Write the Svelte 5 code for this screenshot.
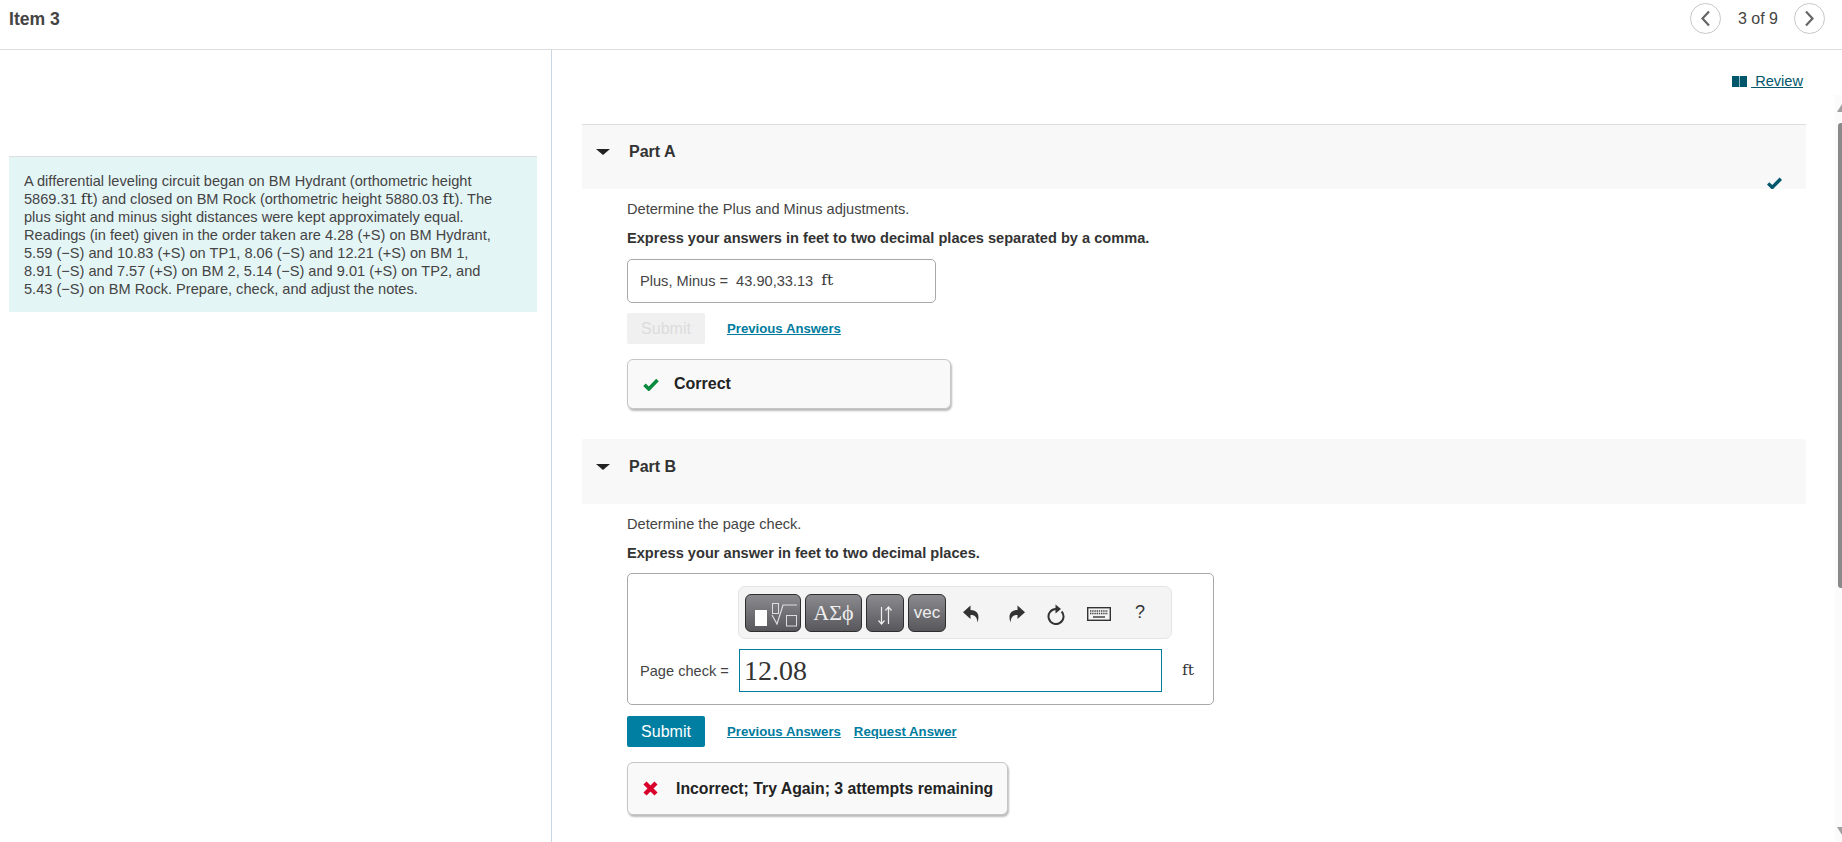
<script>
  const problem = [
    ['A differential leveling circuit began on BM Hydrant (orthometric height'],
    ['5869.31 ', 'ft', ') and closed on BM Rock (orthometric height 5880.03 ', 'ft', '). The'],
    ['plus sight and minus sight distances were kept approximately equal.'],
    ['Readings (in feet) given in the order taken are 4.28 (+S) on BM Hydrant,'],
    ['5.59 (−S) and 10.83 (+S) on TP1, 8.06 (−S) and 12.21 (+S) on BM 1,'],
    ['8.91 (−S) and 7.57 (+S) on BM 2, 5.14 (−S) and 9.01 (+S) on TP2, and'],
    ['5.43 (−S) on BM Rock. Prepare, check, and adjust the notes.'],
  ];
</script>

<div class="page">
  <header class="topbar">
    <h1>Item 3</h1>
    <nav class="pager">
      <span class="round">
        <svg width="11" height="17" viewBox="0 0 11 17"><path d="M9 1.500 2.500 8.500 9 15.500" fill="none" stroke="#666" stroke-width="2.200" /></svg>
      </span>
      <span class="count">3 of 9</span>
      <span class="round">
        <svg width="11" height="17" viewBox="0 0 11 17"><path d="M2 1.500 8.500 8.500 2 15.500" fill="none" stroke="#666" stroke-width="2.200" /></svg>
      </span>
    </nav>
  </header>

  <div class="columns">
    <aside class="left">
      <div class="problem">
        {#each problem as line}
          <div>
            {#each line as bit, i}
              {#if i % 2 === 1}<span class="unit">{bit}</span>{:else}{bit}{/if}
            {/each}
          </div>
        {/each}
      </div>
    </aside>

    <main class="right">
      <div class="review-row">
        <svg class="book" width="15" height="11" viewBox="0 0 15 11"><path d="M0 0h6.600q.6 0 .6.6V11H0zM7.800.6q0-.6.6-.6H15v11H7.800z" fill="#00576b" /></svg>
        <a class="review">&nbsp;Review</a>
      </div>

      <section class="part">
        <div class="part-head">
          <span class="caret"></span>
          <h2>Part A</h2>
          <svg class="done" width="15" height="12" viewBox="0 0 15 12"><path d="M1.200 6.400 5.200 10.400 13.800 1.800" fill="none" stroke="#00576b" stroke-width="3.400" /></svg>
        </div>
        <div class="part-body">
          <p class="ask">Determine the Plus and Minus adjustments.</p>
          <p class="how">Express your answers in feet to two decimal places separated by a comma.</p>
          <div class="answer-box">Plus, Minus = &nbsp;43.90,33.13 &nbsp;<span class="unit">ft</span></div>
          <div class="actions first-actions">
            <button class="submit off">Submit</button>
            <a class="link first">Previous Answers</a>
          </div>
          <div class="feedback good">
            <svg width="16" height="13" viewBox="0 0 16 13"><path d="M1.500 6.800 5.800 11 14.500 2" fill="none" stroke="#0a8a3e" stroke-width="3.600" /></svg>
            <b>Correct</b>
          </div>
        </div>
      </section>

      <section class="part second">
        <div class="part-head">
          <span class="caret"></span>
          <h2>Part B</h2>
        </div>
        <div class="part-body">
          <p class="ask">Determine the page check.</p>
          <p class="how">Express your answer in feet to two decimal places.</p>
          <div class="editor">
            <div class="toolbar">
              <button class="tool wide" aria-label="templates">
                <svg width="54" height="34" viewBox="0 0 54 34">
                  <rect x="9" y="14" width="12" height="16" fill="#fff" />
                  <rect x="26.500" y="7.500" width="6" height="10" fill="none" stroke="#ddd" />
                  <path d="M26 19l5 9 6-19H51" fill="none" stroke="#ddd" stroke-width="1.200" />
                  <rect x="40.500" y="19.500" width="10" height="10.500" fill="none" stroke="#ddd" />
                </svg>
              </button>
              <button class="tool greek">ΑΣϕ</button>
              <button class="tool arrows" aria-label="arrows">
                <svg width="24" height="24" viewBox="0 0 24 24">
                  <path d="M8.500 6v17M5.500 19.500l3 3.500 3-3.500M15.500 23V6M12.500 9.500l3-3.500 3 3.500" fill="none" stroke="#eee" stroke-width="1.200" />
                </svg>
              </button>
              <button class="tool vec">vec</button>
              <svg class="plain icon" style="margin-left: 12px" width="20" height="20" viewBox="0 0 20 20"><path d="M8.500 1.500 1 8.200 8.500 15v-4c4 0 6.500 1.500 7 7.500 3-8.500-1-12.500-7-12.500z" fill="#333" /></svg>
              <svg class="plain icon" style="margin-left: 20px" width="20" height="20" viewBox="0 0 20 20"><path d="M11.500 1.500 19 8.200 11.500 15v-4c-4 0-6.500 1.500-7 7.500-3-8.500 1-12.500 7-12.500z" fill="#333" /></svg>
              <svg class="plain icon" style="margin-left: 16px" width="20" height="22" viewBox="0 0 20 22"><path d="M15.600 8.500a7.500 7.500 0 1 1-5.600-2.500" fill="none" stroke="#333" stroke-width="2" /><path d="M9.500 1.500v9l5.500-4.500z" fill="#333" /></svg>
              <svg class="plain icon" style="margin-left: 17px" width="24" height="14" viewBox="0 0 24 14">
                <rect x=".7" y=".7" width="22.600" height="12.600" fill="#f4f4f4" stroke="#333" stroke-width="1.400" />
                <path d="M3 4h18M3 6.500h18" stroke="#444" stroke-width="1.400" stroke-dasharray="1.400 .8" />
                <path d="M6 10h12" stroke="#444" stroke-width="1.500" />
              </svg>
              <span class="plain help">?</span>
            </div>
            <div class="entry-row">
              <span class="entry-label">Page check =</span>
              <div class="entry">12.08</div>
              <span class="unit entry-unit">ft</span>
            </div>
          </div>
          <div class="actions">
            <button class="submit">Submit</button>
            <a class="link first">Previous Answers</a>
            <a class="link">Request Answer</a>
          </div>
          <div class="feedback bad">
            <svg width="15" height="15" viewBox="0 0 15 15"><path d="M2 2l11 11M13 2 2 13" fill="none" stroke="#d9002c" stroke-width="4.400" /></svg>
            <b>Incorrect; Try Again; 3 attempts remaining</b>
          </div>
        </div>
      </section>
    </main>
  </div>

  <div class="scrollbar">
    <span class="arrow up"></span>
    <span class="thumb"></span>
    <span class="arrow down"></span>
  </div>
</div>

<style>
  :global(body) {
    margin: 0;
    background: #fff;
    overflow: hidden;
  }

  .page {
    position: relative;
    width: 1842px;
    height: 842px;
    overflow: hidden;
    font-family: "Liberation Sans", Arial, sans-serif;
    font-size: 14.6px;
    color: #333;
  }

  .topbar {
    display: flex;
    justify-content: space-between;
    align-items: center;
    height: 37px;
    padding: 0 17px 12px 9px;
    border-bottom: 1px solid #ddd;
  }

  h1 {
    margin: 1px 0 0;
    font-size: 17.6px;
    font-weight: bold;
    color: #444;
  }

  .pager {
    display: flex;
    align-items: center;
  }

  .round {
    display: flex;
    align-items: center;
    justify-content: center;
    width: 29px;
    height: 29px;
    border: 1px solid #c8c8c8;
    border-radius: 50%;
  }

  .count {
    width: 73px;
    padding-left: 1px;
    box-sizing: border-box;
    text-align: center;
    font-size: 16px;
    color: #444;
  }

  .columns {
    display: flex;
    height: 792px;
  }

  .left {
    width: 552px;
    box-sizing: border-box;
    flex: none;
    padding: 106px 14px 0 9px;
    border-right: 1px solid #c8d6e5;
  }

  .problem {
    height: 125px;
    padding: 15px 0 15px 15px;
    border-top: 1px solid #ddd;
    background: #e4f5f6;
    line-height: 18px;
    white-space: nowrap;
    color: #444;
  }

  .unit {
    font-family: "DejaVu Serif", "Liberation Serif", serif;
    font-size: 15.5px;
    line-height: 1;
    color: #333;
  }

  .right {
    flex: 1;
    padding: 0 36px 0 30px;
  }

  .review-row {
    display: flex;
    justify-content: flex-end;
    align-items: center;
    height: 42px;
    margin: 10px 3px 22px 0;
    gap: 4px;
  }

  .review {
    color: #00576b;
    text-decoration: underline;
  }

  .part-head {
    position: relative;
    display: flex;
    align-items: flex-start;
    height: 64px;
    background: #f8f8f8;
    border-top: 1px solid #ddd;
  }

  .second {
    margin-top: 30px;
  }

  .second .part-head {
    border-top-color: transparent;
  }

  .caret {
    width: 0;
    height: 0;
    margin: 24px 14px 0 14px;
    border: 7px solid transparent;
    border-top: 6px solid #222;
    border-bottom: 0;
  }

  h2 {
    margin: 17px 0 0 5px;
    font-size: 16px;
    line-height: 20px;
    font-weight: bold;
    color: #333;
  }

  .done {
    position: absolute;
    right: 24px;
    top: 52px;
  }

  .part-body {
    padding-left: 45px;
  }

  p {
    margin: 0;
    line-height: 20px;
  }

  .ask {
    padding-top: 10px;
    color: #444;
  }

  .how {
    padding-top: 9px;
    font-weight: bold;
  }

  .answer-box {
    display: flex;
    align-items: center;
    width: 295px;
    height: 42px;
    margin-top: 11px;
    padding-left: 12px;
    white-space: pre;
    border: 1px solid #a8a8a8;
    border-radius: 5px;
    color: #444;
  }

  .actions {
    display: flex;
    align-items: center;
    margin-top: 11px;
  }

  .first-actions {
    margin-top: 10px;
  }

  .submit {
    width: 78px;
    height: 31px;
    padding: 0;
    border: 0;
    border-radius: 2px;
    font: 16px "Liberation Sans", Arial, sans-serif;
    color: #fff;
    background: #007fa3;
  }

  .off {
    color: #dcdcdc;
    background: #f0f0f0;
  }

  .link {
    margin-left: 13px;
    font-size: 13.2px;
    font-weight: bold;
    color: #007c9e;
    text-decoration: underline;
  }

  .link.first {
    margin-left: 22px;
  }

  .feedback {
    display: flex;
    align-items: center;
    box-sizing: border-box;
    width: fit-content;
    margin-top: 15px;
    background: #f9f9f9;
    border: 1px solid #c6c6c6;
    border-radius: 6px;
    box-shadow: 1px 2px 2px #bbb;
    font-size: 16px;
    color: #222;
  }

  .feedback b {
    white-space: nowrap;
  }

  .good {
    width: 324px;
    height: 50px;
    padding-left: 15px;
    gap: 15px;
  }

  .bad {
    width: 381px;
    height: 53px;
    padding-left: 15px;
    gap: 18px;
    font-size: 15.8px;
  }

  .editor {
    box-sizing: border-box;
    width: 587px;
    height: 132px;
    margin-top: 10px;
    padding: 12px 0 0 12px;
    border: 1px solid #a8a8a8;
    border-radius: 5px;
  }

  .toolbar {
    display: flex;
    align-items: center;
    box-sizing: border-box;
    width: 434px;
    height: 53px;
    margin-left: 98px;
    padding-left: 6px;
    gap: 4px;
    background: #f4f4f4;
    border: 1px solid #e4e4e4;
    border-radius: 7px;
  }

  .tool {
    display: flex;
    align-items: center;
    justify-content: center;
    box-sizing: border-box;
    height: 38px;
    padding: 0;
    border: 1px solid #2e2e2e;
    border-radius: 6px;
    background: linear-gradient(#8b8b8f, #58585c);
    color: #eee;
  }

  .wide {
    width: 56px;
  }

  .greek {
    width: 57px;
    font: 22px "Liberation Serif", serif;
  }

  .arrows {
    width: 38px;
  }

  .vec {
    width: 38px;
    font: 17px "Liberation Sans", Arial, sans-serif;
  }

  .plain {
    flex: none;
  }

  .icon {
    margin-top: 2px;
  }

  .help {
    margin-left: 20px;
    font-size: 18px;
    color: #333;
  }

  .entry-row {
    display: flex;
    align-items: center;
    margin-top: 10px;
  }

  .entry-label {
    width: 99px;
    color: #444;
  }

  .entry {
    box-sizing: border-box;
    width: 423px;
    height: 43px;
    padding-left: 4px;
    border: 1px solid #007c9e;
    font: 28px/41px "Liberation Serif", serif;
    color: #333;
  }

  .entry-unit {
    margin-left: 20px;
  }

  .scrollbar {
    position: absolute;
    top: 95px;
    right: 0;
    bottom: 0;
    width: 7px;
    background: #fbfbfb;
  }

  .arrow {
    position: absolute;
    right: -5px;
    width: 0;
    height: 0;
    border: 5px solid transparent;
  }

  .up {
    top: 9px;
    border-top: 0;
    border-bottom: 8px solid #a0a0a0;
  }

  .down {
    bottom: 7px;
    border-bottom: 0;
    border-top: 8px solid #a0a0a0;
  }

  .thumb {
    position: absolute;
    top: 28px;
    left: 3px;
    right: 0;
    height: 465px;
    background: #8a8a8a;
    border-radius: 3px 0 0 3px;
  }
</style>
